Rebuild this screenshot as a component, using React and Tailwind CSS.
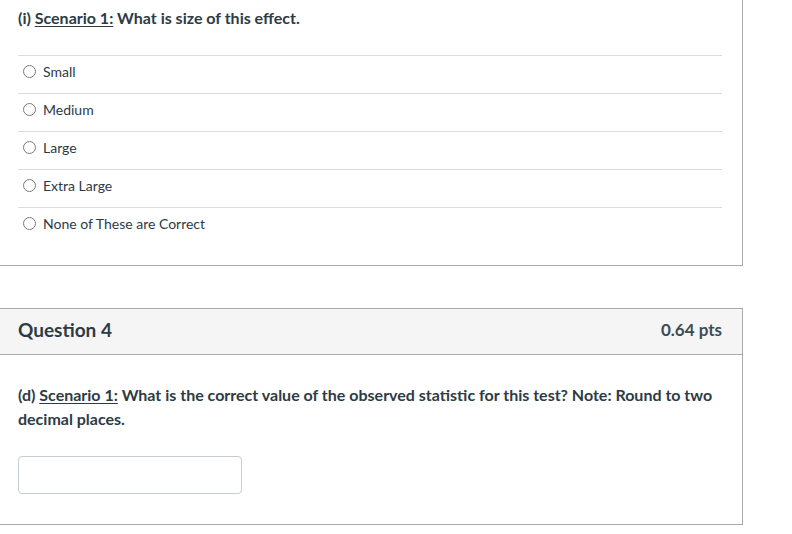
import { useState } from "react";

const options = ["Small", "Medium", "Large", "Extra Large", "None of These are Correct"];

function Radio({ label, checked, onSelect }) {
  return (
    <label className="flex cursor-pointer items-center border-t border-[#dcdcdc] pt-[5px] pb-[11px] pl-[5px] text-[14px] leading-[21px] text-[#2d3b45]">
      <span className="mr-[7px] flex h-[13px] w-[13px] shrink-0 items-center justify-center rounded-full border border-[#7a7a7a] bg-white">
        {checked && <span className="h-[7px] w-[7px] rounded-full bg-[#2d3b45]" />}
      </span>
      <input type="radio" className="hidden" checked={checked} onChange={onSelect} />
      {label}
    </label>
  );
}

export default function App() {
  const [choice, setChoice] = useState(null);
  const [answer, setAnswer] = useState("");

  return (
    <div className="min-h-[534px] overflow-hidden bg-white font-['Lato','Noto_Sans',sans-serif] text-[#2d3b45]">
      <div className="-mt-px -ml-px w-[744px] border border-[#a9a9a9] pt-[6px] pr-[20px] pb-[20px] pl-[18px]">
        <p className="text-[16px] font-bold leading-[24px]">
          (i) <span className="underline underline-offset-2">Scenario 1:</span> What is size of this effect.
        </p>
        <div className="mt-[25px]">
          {options.map((opt) => (
            <Radio key={opt} label={opt} checked={choice === opt} onSelect={() => setChoice(opt)} />
          ))}
        </div>
      </div>

      <div className="mt-[42px] -ml-px w-[744px] border border-[#a9a9a9]">
        <div className="flex h-[46px] items-center justify-between border-b border-[#a9a9a9] bg-[#f5f5f5] pr-[20px] pb-[4px] pl-[18px]">
          <h2 className="text-[19px] font-bold leading-[27px]">Question 4</h2>
          <span className="text-[17px] font-bold text-[#3d4b56]">0.64 pts</span>
        </div>
        <div className="pt-[28px] pr-[20px] pb-[30px] pl-[18px]">
          <p className="text-[16px] font-bold leading-[24px]">
            (d) <span className="underline underline-offset-2">Scenario 1:</span> What is the correct value of the observed statistic for this test? Note: Round to two decimal places.
          </p>
          <input
            type="text"
            value={answer}
            onChange={(e) => setAnswer(e.target.value)}
            className="mt-[25px] block h-[38px] w-[224px] rounded-[4px] border border-[#c7cdd1] px-2 text-[14px] outline-none"
          />
        </div>
      </div>
    </div>
  );
}
